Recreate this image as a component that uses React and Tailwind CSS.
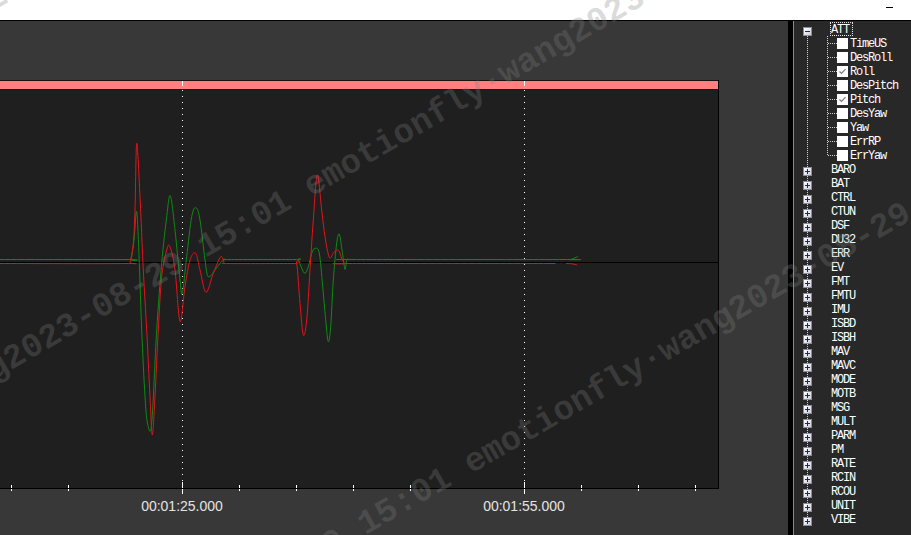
import React from "react";

const RED = [
  [0, 263.5], [126, 263.5], [130, 261.7], [133.3, 243.3], [135, 210], [136.7, 143.3], [140, 196.7],
  [143.3, 270], [146.7, 330], [150, 396.7], [152.3, 435], [155, 396.7], [158.3, 330], [161.7, 276.7],
  [166.7, 250], [170, 246.7], [175, 270], [180, 321.7], [185, 286.7], [190, 260], [195.7, 253.3],
  [200, 270], [206, 292.3], [213.3, 273.3], [220.7, 256.7], [224, 262.5], [228, 263.5], [293, 263.5],
  [296.7, 263.5], [300, 303.3], [303.3, 335], [306.7, 320], [310, 270], [313.3, 220], [317.3, 175],
  [321.7, 210], [325, 236.7], [329.3, 257.3], [333.3, 253.3], [336.7, 250], [339.3, 251.7],
  [341.7, 258.3], [345, 263.5], [349, 263.5], [555.5, 263.5],
];
const RED_END = [[566, 263.5], [572, 263.8], [577, 265]];

const GREEN = [
  [0, 259.5], [127, 259.5], [131, 259], [134, 240], [136.7, 211.7], [139.3, 263.3], [141.7, 330],
  [145, 396.7], [147.7, 424], [151.7, 423], [156.7, 330], [161.7, 263.3], [166.7, 216.7],
  [170.3, 195.7], [175, 230], [180, 280], [182.3, 293.3], [186.7, 256.7], [191.7, 216.7], [196, 207.7],
  [200, 220], [205, 260], [208.3, 276.7], [215, 270], [220, 263.3], [225, 259.5], [229, 259.5],
  [295, 259.5], [298.3, 259.5], [301.7, 268.3], [305, 273.3], [308.3, 266.7], [311.7, 253.3],
  [315, 248.3], [319.3, 253.3], [322.7, 286.7], [326, 323.3], [328.3, 341.7], [330.7, 326.7],
  [333.3, 280], [336.7, 243.3], [339.3, 234], [342, 250], [345, 269.3], [346.7, 260], [349, 259.5],
  [353, 259.5], [563, 259.5], [570, 259.6], [575, 257.8], [578, 256.5],
];

function smooth(pts) {
  let d = `M${pts[0][0]} ${pts[0][1]}`;
  for (let i = 0; i < pts.length - 1; i++) {
    const p0 = pts[i - 1] || pts[i];
    const p1 = pts[i];
    const p2 = pts[i + 1];
    const p3 = pts[i + 2] || p2;
    const c1x = p1[0] + (p2[0] - p0[0]) / 6;
    const c1y = p1[1] + (p2[1] - p0[1]) / 6;
    const c2x = p2[0] - (p3[0] - p1[0]) / 6;
    const c2y = p2[1] - (p3[1] - p1[1]) / 6;
    d += ` C${c1x.toFixed(2)} ${c1y.toFixed(2)} ${c2x.toFixed(2)} ${c2y.toFixed(2)} ${p2[0]} ${p2[1]}`;
  }
  return d;
}

const MINOR = [11.5, 68.5, 239.5, 296.5, 353.5, 410.5, 581.5, 638.5, 695.5];
const MAJOR = [182.5, 524.5];

function Chart() {
  return (
    <svg width="788" height="455" viewBox="0 80 788 455" className="block shrink-0">
      <defs>
        <clipPath id="plot">
          <rect x="0" y="90" width="718" height="398" />
        </clipPath>
      </defs>
      <rect x="0" y="80" width="718" height="10" fill="#1c0f0f" />
      <rect x="0" y="81" width="718" height="8" fill="#ff8080" />
      <rect x="0" y="90" width="718" height="398" fill="#1f1f1f" />
      {MAJOR.map((x) => (
        <line key={"g" + x} x1={x} x2={x} y1="90" y2="488" stroke="#ffffff" strokeDasharray="1 5" />
      ))}
      {MAJOR.map((x) => (
        <line key={"p" + x} x1={x} x2={x} y1="81" y2="86" stroke="#ffffff" />
      ))}
      <line x1="0" x2="718" y1="262.5" y2="262.5" stroke="#000000" />
      <g clipPath="url(#plot)" fill="none" strokeWidth="1">
        <path d={smooth(GREEN)} stroke="#0f8a14" />
        <path d={smooth(RED)} stroke="#e3141a" />
        <path d={smooth(RED_END)} stroke="#e3141a" />
      </g>
      {MINOR.map((x) => (
        <line key={"m" + x} x1={x} x2={x} y1="485" y2="491" stroke="#ffffff" />
      ))}
      {MAJOR.map((x) => (
        <line key={"M" + x} x1={x} x2={x} y1="482" y2="494" stroke="#ffffff" />
      ))}
      <line x1="0" x2="719" y1="488.5" y2="488.5" stroke="#000000" />
      <line x1="718.5" x2="718.5" y1="80" y2="489" stroke="#000000" />
      <g fontFamily="'Liberation Sans', Arial, sans-serif" fontSize="14" fill="#e4e4e4" textAnchor="middle">
        <text x="182" y="511">00:01:25.000</text>
        <text x="524" y="511">00:01:55.000</text>
      </g>
    </svg>
  );
}

function Box({ expanded }) {
  return (
    <div className="relative z-10 mt-[5px] w-[9px] h-[9px] shrink-0 border border-[#8a8aa2] bg-gradient-to-br from-[#ffffff] to-[#cfcfdb] flex items-center justify-center">
      <svg width="7" height="7" viewBox="0 0 7 7" className="block">
        <path d={expanded ? "M1 3.5h5" : "M1 3.5h5M3.5 1v5"} stroke="#1e2a5c" strokeWidth="1" />
      </svg>
    </div>
  );
}

function TopRow({ label, expanded, focused }) {
  return (
    <div className="relative h-[14px] flex items-start">
      <div className="w-[9px] shrink-0" />
      <Box expanded={expanded} />
      <div className="w-[18px] shrink-0" />
      <span
        className={
          "h-[14px] pr-[3px] border leading-[12px] flex items-center " +
          (focused ? "border-dotted border-[#e8e8e8]" : "border-transparent")
        }
      >
        <span className="relative top-[1px]">{label}</span>
      </span>
    </div>
  );
}

function Check({ on }) {
  return (
    <div className="w-[11px] h-[11px] shrink-0 bg-white flex items-center justify-center">
      {on && (
        <svg width="11" height="11" viewBox="0 0 11 11" className="block">
          <path d="M2.5 5.5 L4.5 7.5 L8.5 3.2" fill="none" stroke="#7c7c7c" strokeWidth="1.2" />
        </svg>
      )}
    </div>
  );
}

function ChildRow({ label, on }) {
  return (
    <div className="relative h-[14px] flex items-center">
      <div className="w-[34px] shrink-0" />
      <div className="w-[9px] h-0 shrink-0 border-t border-dotted border-[#d0d0d0]" />
      <Check on={on} />
      <span className="relative top-[1px] ml-[2px]">{label}</span>
    </div>
  );
}

const CHILDREN = [
  ["TimeUS", false], ["DesRoll", false], ["Roll", true], ["DesPitch", false], ["Pitch", true],
  ["DesYaw", false], ["Yaw", false], ["ErrRP", false], ["ErrYaw", false],
];
const GROUPS = [
  "BARO", "BAT", "CTRL", "CTUN", "DSF", "DU32", "ERR", "EV", "FMT", "FMTU", "IMU", "ISBD", "ISBH",
  "MAV", "MAVC", "MODE", "MOTB", "MSG", "MULT", "PARM", "PM", "RATE", "RCIN", "RCOU", "UNIT", "VIBE",
];

function Tree() {
  return (
    <div className="relative flex-1 overflow-hidden bg-[#282828] pt-px font-['Liberation_Mono',monospace] text-[12px] leading-[14px] tracking-[-1.2px] text-white">
      <div className="absolute left-[13px] top-[15px] h-[485px] border-l border-dotted border-[#d0d0d0]" />
      <div className="absolute left-[33px] top-[15px] h-[119px] border-l border-dotted border-[#d0d0d0]" />
      <TopRow label="ATT" expanded focused />
      {CHILDREN.map(([l, on]) => (
        <ChildRow key={l} label={l} on={on} />
      ))}
      {GROUPS.map((g) => (
        <TopRow key={g} label={g} />
      ))}
    </div>
  );
}

const WM = "emotionfly·wang2023-08-29 15:01 ";

function Watermark() {
  return (
    <svg width="911" height="535" className="absolute left-0 top-0 pointer-events-none">
      <g
        transform="translate(311 197) rotate(-30)"
        fontFamily="'Liberation Mono', monospace"
        fontWeight="bold"
        fontSize="34"
        fill="rgba(128,128,128,0.28)"
      >
        {[-1, 0, 1].map((k) => (
          <text key={k} x={-2 * 32 * 20.4} y={k * 320} xmlSpace="preserve">
            {WM.repeat(5)}
          </text>
        ))}
      </g>
    </svg>
  );
}

export default function App() {
  return (
    <div className="relative w-[911px] h-[535px] overflow-hidden bg-white flex flex-col">
      <div className="h-[21px] shrink-0 bg-white border-b border-black flex justify-end items-start">
        <div className="mt-[7px] mr-[18px] w-[7px] h-px bg-black" />
      </div>
      <div className="flex flex-1 min-h-0">
        <div className="w-[788px] shrink-0 bg-[#383838] flex flex-col">
          <div className="h-[59px] shrink-0" />
          <Chart />
        </div>
        <div className="w-[5px] shrink-0 bg-black" />
        <div className="w-px shrink-0 bg-[#8a8a8a]" />
        <Tree />
      </div>
      <Watermark />
    </div>
  );
}
